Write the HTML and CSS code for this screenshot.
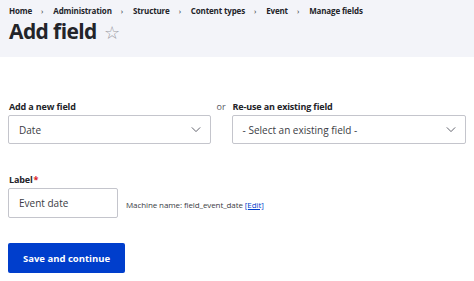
FILE: index.html
```html
<!DOCTYPE html>
<html lang="en">
<head>
    <meta charset="UTF-8">
    <meta name="viewport" content="width=device-width, initial-scale=1.0">
    <title>Add field</title>
    <link rel="stylesheet" href="styles.css">
</head>
<body>
    <header class="page-header">
        <nav class="breadcrumb">
            <a href="#">Home</a><span class="sep">&rsaquo;</span>
            <a href="#">Administration</a><span class="sep">&rsaquo;</span>
            <a href="#">Structure</a><span class="sep">&rsaquo;</span>
            <a href="#">Content types</a><span class="sep">&rsaquo;</span>
            <a href="#">Event</a><span class="sep">&rsaquo;</span>
            <a href="#">Manage fields</a>
        </nav>
        <h1 class="title">Add field <span class="star">&#9734;</span></h1>
    </header>

    <form class="field-form">
        <div class="field-row">
            <div class="field new-field">
                <label class="form-label">Add a new field</label>
                <div class="select">
                    <span>Date</span>
                    <svg class="chevron" viewBox="0 0 12 8" width="10" height="7"><path d="M1 1.5l5 5 5-5" fill="none" stroke="#545560" stroke-width="1.1"/></svg>
                </div>
            </div>
            <span class="or">or</span>
            <div class="field existing-field">
                <label class="form-label">Re-use an existing field</label>
                <div class="select">
                    <span>- Select an existing field -</span>
                    <svg class="chevron" viewBox="0 0 12 8" width="10" height="7"><path d="M1 1.5l5 5 5-5" fill="none" stroke="#545560" stroke-width="1.1"/></svg>
                </div>
            </div>
        </div>

        <div class="field label-field">
            <label class="form-label">Label<span class="required">*</span></label>
            <div class="label-row">
                <div class="text-input">Event date</div>
                <span class="machine-name">Machine name: field_event_date <a href="#">[Edit]</a></span>
            </div>
        </div>

        <button type="button" class="btn-primary">Save and continue</button>
    </form>
</body>
</html>
```

FILE: styles.css
```css
:root {
    --header-bg: #f3f4f9;
    --text-color: #232429;
    --border-color: #c4c5cc;
    --primary: #003ecc;
    --link: #003ecc;
}

body {
    margin: 0;
    font-family: "Open Sans", "Noto Sans", sans-serif;
    color: var(--text-color);
    background: #fff;
}

.page-header {
    background-color: var(--header-bg);
    height: 57px;
    padding: 5px 9px 0;
    box-sizing: border-box;
}

.breadcrumb {
    font-size: 8px;
    font-weight: 700;
    line-height: 12px;
    letter-spacing: -0.15px;
    white-space: nowrap;
}

.breadcrumb a {
    color: var(--text-color);
    text-decoration: none;
}

.breadcrumb .sep {
    display: inline-block;
    margin: 0 8px 0 9px;
    font-weight: 400;
}

.title {
    margin: 0;
    font-size: 21px;
    font-weight: 700;
    line-height: 28px;
    letter-spacing: -0.6px;
}

.star {
    font-size: 18px;
    font-weight: 400;
    color: #9a9ba3;
    margin-left: 2px;
}

.field-form {
    padding: 44px 8px 0;
}

.field-row {
    display: flex;
    align-items: flex-start;
}

.form-label {
    display: block;
    font-size: 9px;
    font-weight: 700;
    line-height: 12px;
    letter-spacing: -0.15px;
    margin-bottom: 2px;
    padding-left: 1px;
}

.new-field {
    width: 204px;
}

.existing-field {
    width: 235px;
}

.or {
    font-size: 9px;
    color: #55565e;
    margin: 0 6px 0 5px;
    line-height: 12px;
}

.select {
    height: 29px;
    box-sizing: border-box;
    border: 1px solid var(--border-color);
    border-radius: 2px;
    display: flex;
    align-items: center;
    justify-content: space-between;
    padding: 0 9px 0 10px;
    font-size: 10px;
    color: #3b3c44;
}

.label-field {
    margin-top: 30px;
}

.required {
    color: #dc2323;
    margin-left: 1px;
}

.label-row {
    display: flex;
    align-items: center;
    gap: 8px;
}

.text-input {
    width: 110px;
    height: 30px;
    box-sizing: border-box;
    border: 1px solid var(--border-color);
    border-radius: 2px;
    display: flex;
    align-items: center;
    padding-left: 10px;
    font-size: 10px;
    color: #3b3c44;
}

.machine-name {
    font-size: 8px;
    color: #3b3c44;
    letter-spacing: -0.1px;
    padding-top: 2px;
}

.machine-name a {
    color: var(--link);
}

.btn-primary {
    margin-top: 25px;
    width: 117px;
    height: 30px;
    border: none;
    border-radius: 2px;
    background-color: var(--primary);
    color: #fff;
    font-family: inherit;
    font-size: 9.5px;
    font-weight: 700;
    padding: 0;
    cursor: pointer;
}
```
